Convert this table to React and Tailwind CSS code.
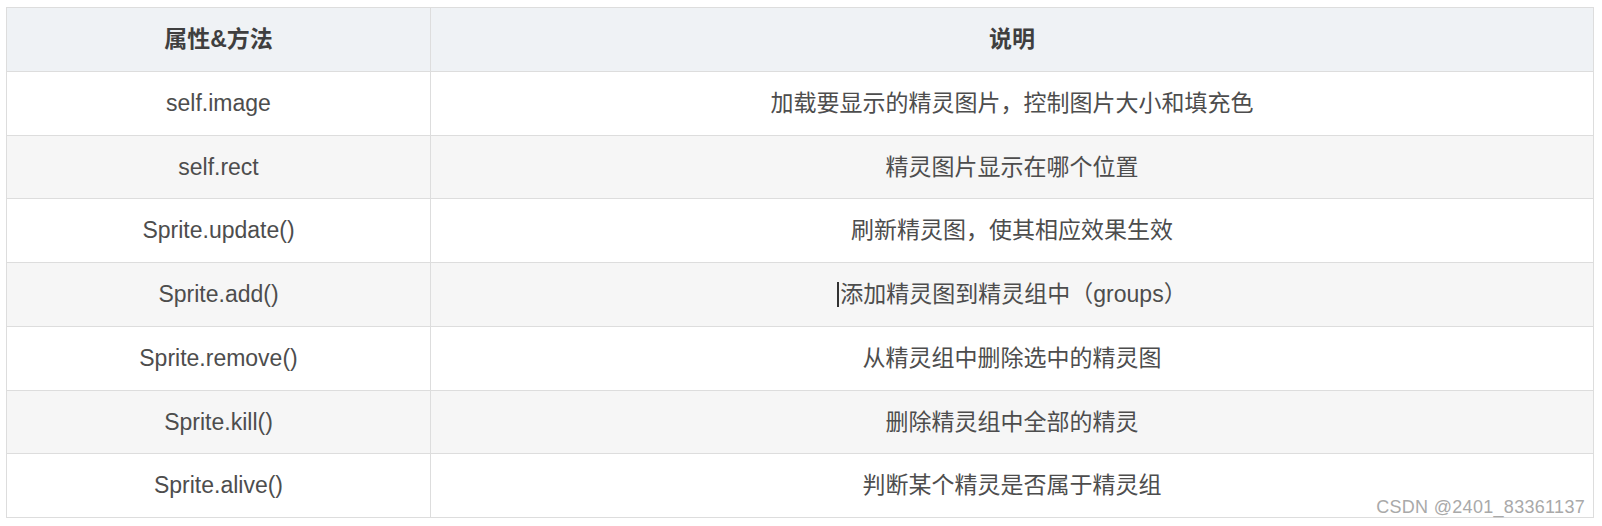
import React from "react";

const rows = [
  { k: "self.image", v: "加载要显示的精灵图片，控制图片大小和填充色", h: "h-[64px]" },
  { k: "self.rect", v: "精灵图片显示在哪个位置", h: "h-[63px]" },
  { k: "Sprite.update()", v: "刷新精灵图，使其相应效果生效", h: "h-[64px]" },
  { k: "Sprite.add()", v: "添加精灵图到精灵组中（groups）", h: "h-[64px]", cursor: true },
  { k: "Sprite.remove()", v: "从精灵组中删除选中的精灵图", h: "h-[64px]" },
  { k: "Sprite.kill()", v: "删除精灵组中全部的精灵", h: "h-[63px]" },
  { k: "Sprite.alive()", v: "判断某个精灵是否属于精灵组", h: "h-[64px]" },
];

export default function App() {
  return (
    <div
      className="relative w-[1602px] h-[526px] bg-white pt-[7px] pl-[6px]"
      style={{ fontFamily: '"Liberation Sans", "Noto Sans CJK SC", sans-serif' }}
    >
      <div className="w-[1588px] border-l border-t border-[#dddddd] text-[23px] text-[#4d4d4d]">
        <div className="flex h-[64px] bg-[#eff2f5] font-bold text-[#3f3f3f]">
          <div className="w-[424px] flex items-center justify-center border-r border-b border-[#dddddd]">属性&amp;方法</div>
          <div className="flex-1 flex items-center justify-center border-r border-b border-[#dddddd]">说明</div>
        </div>
        {rows.map((r, i) => (
          <div key={i} className={`flex ${r.h} ${i % 2 === 1 ? "bg-[#f6f6f6]" : "bg-white"}`}>
            <div className="w-[424px] flex items-center justify-center border-r border-b border-[#dddddd]">{r.k}</div>
            <div className="flex-1 flex items-center justify-center border-r border-b border-[#dddddd]">
              {r.cursor && <span className="inline-block w-[2px] h-[25px] bg-[#333333] mr-[1px]" />}
              {r.v}
            </div>
          </div>
        ))}
      </div>
      <div className="absolute right-[17px] top-[498px] text-[18px] text-[#a9a9a9] leading-none tracking-[0.3px]">
        CSDN @2401_83361137
      </div>
    </div>
  );
}
